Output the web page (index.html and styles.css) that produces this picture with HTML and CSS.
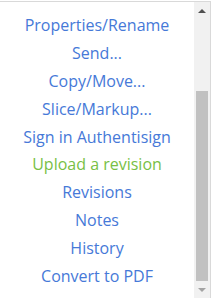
FILE: index.html
```html
<!DOCTYPE html>
<html>
<head>
  <title>Document Actions</title>
  <link rel="stylesheet" href="styles.css">
</head>
<body>
  <div class="menu">
    <ul class="menu-list">
      <li><a href="#">Properties/Rename</a></li>
      <li><a href="#">Send...</a></li>
      <li><a href="#">Copy/Move...</a></li>
      <li><a href="#">Slice/Markup...</a></li>
      <li><a href="#">Sign in Authentisign</a></li>
      <li><a href="#" class="upload">Upload a revision</a></li>
      <li><a href="#">Revisions</a></li>
      <li><a href="#">Notes</a></li>
      <li><a href="#">History</a></li>
      <li><a href="#">Convert to PDF</a></li>
    </ul>
    <div class="scrollbar">
      <div class="arrow arrow-up"></div>
      <div class="track">
        <div class="thumb"></div>
      </div>
      <div class="arrow arrow-down"></div>
    </div>
  </div>
</body>
</html>
```

FILE: styles.css
```css
html, body {
  margin: 0;
  padding: 0;
  background-color: #fff;
}

.menu {
  display: flex;
  width: 211px;
  height: 297px;
  margin-top: 1px;
  border-top: 1px solid #d9d9d9;
  border-right: 1px solid #d9d9d9;
  box-sizing: border-box;
  overflow: hidden;
}

.menu-list {
  flex: 1;
  list-style: none;
  margin: 0;
  padding: 9px 0 0 0;
}

.menu-list li {
  height: 27.9px;
  line-height: 28px;
  text-align: center;
}

.menu-list a {
  font-family: "Open Sans", sans-serif;
  font-size: 16px;
  color: #4679d8;
  text-decoration: none;
}

.menu-list a.upload {
  color: #78bf45;
}

.scrollbar {
  width: 16px;
  display: flex;
  flex-direction: column;
  background-color: #f1f1f1;
}

.arrow {
  height: 17px;
  display: flex;
  align-items: center;
  justify-content: center;
}

.arrow-up::before {
  content: "";
  border-left: 4px solid transparent;
  border-right: 4px solid transparent;
  border-bottom: 4px solid #505050;
}

.arrow-down::before {
  content: "";
  border-left: 4px solid transparent;
  border-right: 4px solid transparent;
  border-top: 4px solid #a3a3a3;
}

.track {
  flex: 1;
  display: flex;
  flex-direction: column;
  justify-content: flex-end;
  padding: 0 2px;
}

.thumb {
  height: 190px;
  background-color: #c1c1c1;
}
```
